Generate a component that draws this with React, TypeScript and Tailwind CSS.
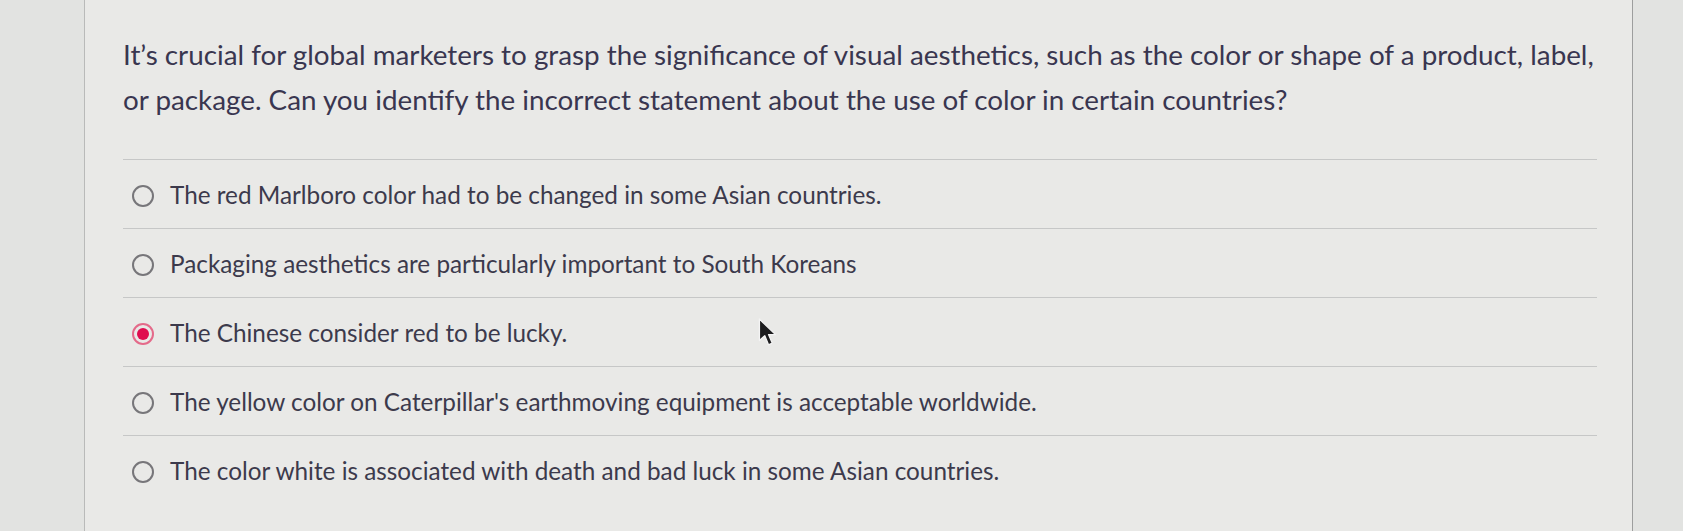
import React from 'react';

const options = [
  { label: 'The red Marlboro color had to be changed in some Asian countries.', checked: false },
  { label: 'Packaging aesthetics are particularly important to South Koreans', checked: false },
  { label: 'The Chinese consider red to be lucky.', checked: true },
  { label: "The yellow color on Caterpillar's earthmoving equipment is acceptable worldwide.", checked: false },
  { label: 'The color white is associated with death and bad luck in some Asian countries.', checked: false },
];

function Radio({ checked }: { checked: boolean }) {
  if (checked) {
    return (
      <span className="w-[22px] h-[22px] rounded-full border-2 border-[#e46a8a] flex items-center justify-center shrink-0">
        <span className="w-[12px] h-[12px] rounded-full bg-[#df0d4f]" />
      </span>
    );
  }
  return <span className="w-[22px] h-[22px] rounded-full border-2 border-[#77767a] shrink-0" />;
}

function Cursor() {
  return (
    <svg className="absolute left-[758px] top-[318px]" width="20" height="30" viewBox="0 0 18 28">
      <path d="M1 1 L1 21 L6 16.5 L9.5 25 L13 23.5 L9.5 15.5 L16 15.5 Z" fill="#1c1c1e" stroke="#f4f4f4" strokeWidth="1.2" strokeLinejoin="round" />
    </svg>
  );
}

export default function App() {
  return (
    <div className="w-[1683px] h-[531px] bg-[#e2e3e1] flex overflow-hidden relative font-['Lato','Liberation_Sans',sans-serif]">
      <div className="w-[84px] shrink-0" />
      <div className="w-[1549px] shrink-0 bg-[#e9e9e7] border-l border-r border-l-[#b9bab9] border-r-[#9d9e9e] pl-[38px] pr-[35px] pt-[32px]">
        <p className="text-[27.8px] leading-[45px] text-[#393650] whitespace-nowrap">
          It’s crucial for global marketers to grasp the significance of visual aesthetics, such as the color or shape of a product, label,
          <br />
          or package. Can you identify the incorrect statement about the use of color in certain countries?
        </p>
        <div className="mt-[37px]">
          {options.map((o, i) => (
            <div key={i} className="h-[69px] border-t border-[#c6c7c7] flex items-center pl-[9px] pt-[3px] gap-[16px]">
              <Radio checked={o.checked} />
              <span className="text-[24.3px] text-[#3c3a4c]">{o.label}</span>
            </div>
          ))}
        </div>
      </div>
      <Cursor />
    </div>
  );
}
